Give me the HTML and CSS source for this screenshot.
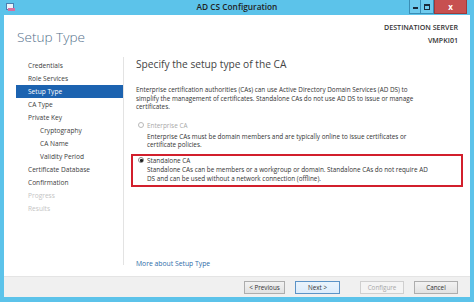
FILE: index.html
```html
<!DOCTYPE html>
<html lang="en">
<head>
    <meta charset="UTF-8">
    <title>AD CS Configuration</title>
    <link rel="stylesheet" href="styles.css">
</head>
<body>
    <div class="window">
        <div class="titlebar">
            <svg class="app-icon" width="9" height="9" viewBox="0 0 9 9">
                <rect x="0.5" y="0.5" width="7" height="6" fill="#e8f4fb" stroke="#4a7fb0" stroke-width="1"/>
                <rect x="2" y="5" width="7" height="3" fill="#d86fa0"/>
            </svg>
            <div class="title">AD CS Configuration</div>
            <div class="controls">
                <div class="ctl ctl-min"><span></span></div>
                <div class="ctl ctl-max"><span></span></div>
                <div class="ctl ctl-close">x</div>
            </div>
        </div>

        <div class="client">
            <div class="header">
                <h1>Setup Type</h1>
                <div class="dest">
                    <div>DESTINATION SERVER</div>
                    <div>VMPKI01</div>
                </div>
            </div>

            <div class="main">
                <ul class="nav">
                    <li>Credentials</li>
                    <li>Role Services</li>
                    <li class="active">Setup Type</li>
                    <li>CA Type</li>
                    <li>Private Key</li>
                    <li class="sub">Cryptography</li>
                    <li class="sub">CA Name</li>
                    <li class="sub">Validity Period</li>
                    <li>Certificate Database</li>
                    <li>Confirmation</li>
                    <li class="off">Progress</li>
                    <li class="off">Results</li>
                </ul>

                <div class="content">
                    <h2>Specify the setup type of the CA</h2>
                    <p class="intro">Enterprise certification authorities (CAs) can use Active Directory Domain Services (AD DS) to<br>
                    simplify the management of certificates. Standalone CAs do not use AD DS to issue or manage<br>
                    certificates.</p>

                    <div class="option disabled">
                        <div class="option-label"><span class="radio"></span>Enterprise CA</div>
                        <p>Enterprise CAs must be domain members and are typically online to issue certificates or<br>
                        certificate policies.</p>
                    </div>

                    <div class="option highlight">
                        <div class="option-label"><span class="radio checked"></span>Standalone CA</div>
                        <p>Standalone CAs can be members or a workgroup or domain. Standalone CAs do not require AD<br>
                        DS and can be used without a network connection (offline).</p>
                    </div>

                    <a class="more" href="#">More about Setup Type</a>
                </div>
            </div>

            <div class="footer">
                <button class="btn">&lt; Previous</button>
                <button class="btn btn-default">Next &gt;</button>
                <button class="btn btn-disabled">Configure</button>
                <button class="btn">Cancel</button>
            </div>
        </div>
    </div>
</body>
</html>
```

FILE: styles.css
```css
html, body {
    margin: 0;
    padding: 0;
}
body {
    font-family: "Open Sans", "Noto Sans", sans-serif;
    color: #333;
}
.window {
    width: 474px;
    height: 302px;
    box-sizing: border-box;
    background-color: #5cc3ea;
    padding: 0 4px 5px 4px;
    display: flex;
    flex-direction: column;
}
.titlebar {
    height: 15px;
    display: flex;
    align-items: flex-start;
    position: relative;
}
.app-icon {
    margin: 3px 0 0 2px;
}
.title {
    position: absolute;
    left: 0;
    right: 0;
    top: 1px;
    text-align: center;
    font-size: 8.3px;
    font-weight: 600;
    color: #222;
}
.controls {
    margin-left: auto;
    margin-right: 3px;
    display: flex;
    position: relative;
}
.ctl {
    height: 14px;
    box-sizing: border-box;
    border: 1px solid #3a8db5;
    border-top: none;
    display: flex;
    align-items: center;
    justify-content: center;
}
.ctl-min {
    width: 12px;
    background-color: #6fcbee;
}
.ctl-max {
    width: 13px;
    border-left: none;
    background-color: #6fcbee;
}
.ctl-min span {
    width: 5px;
    height: 2px;
    background-color: #1a2a3a;
    margin-top: 3px;
}
.ctl-max span {
    width: 4px;
    height: 3px;
    border: 1px solid #1a2a3a;
    border-top-width: 2px;
}
.ctl-close {
    width: 33px;
    background-color: #c75050;
    border-color: #9e3a3a;
    color: #fff;
    font-size: 8px;
    font-weight: bold;
    line-height: 1;
}
.client {
    flex: 1;
    background-color: #fff;
    display: flex;
    flex-direction: column;
}
.header {
    height: 42px;
    display: flex;
    justify-content: space-between;
    padding: 0 12px 0 13px;
}
.header h1 {
    margin: 12px 0 0 0;
    font-size: 13.6px;
    font-weight: 300;
    color: #55718c;
}
.dest {
    margin-top: 6px;
    text-align: right;
    font-size: 7.1px;
    font-weight: 600;
    line-height: 13px;
    color: #333;
}
.main {
    flex: 1;
    display: flex;
    padding-bottom: 11px;
}
.nav {
    list-style: none;
    margin: 0;
    padding: 2px 0 0 12px;
    width: 107px;
    border-right: 1px solid #e3e3e3;
}
.nav li {
    height: 13px;
    line-height: 13px;
    padding-left: 12px;
    font-size: 6.6px;
    color: #3c3c3c;
}
.nav li.sub {
    padding-left: 24px;
}
.nav li.active {
    background-color: #1c63b0;
    color: #fff;
}
.nav li.off {
    color: #c4c4c4;
}
.content {
    flex: 1;
    padding-left: 12px;
    display: flex;
    flex-direction: column;
}
.content h2 {
    margin: 0;
    font-size: 10.2px;
    font-weight: 400;
    line-height: 14px;
    color: #444;
}
.content p {
    margin: 0;
    font-size: 6.35px;
    line-height: 8.6px;
    white-space: nowrap;
    color: #333;
}
.intro {
    margin-top: 15px !important;
}
.option {
    margin-top: 9px;
}
.option-label {
    display: flex;
    align-items: center;
    height: 9px;
    font-size: 6.4px;
    margin-left: 2px;
}
.option p {
    margin-top: 3px !important;
    padding-left: 11px;
}
.radio {
    width: 4px;
    height: 4px;
    border: 1px solid #b9b9b9;
    border-radius: 50%;
    margin-right: 3px;
    background-color: #fff;
    display: flex;
    align-items: center;
    justify-content: center;
}
.radio.checked {
    border-color: #888;
}
.radio.checked::after {
    content: "";
    width: 3px;
    height: 3px;
    background-color: #222;
    border-radius: 1px;
}
.option.disabled .option-label {
    color: #a8a8a8;
}
.option.highlight {
    margin: 4px 7px 0 -5px;
    padding: 0 3px 2px 3px;
    border: 2px solid #d21f2c;
}
.option.highlight p {
    margin-top: 1px !important;
}
.more {
    margin-top: auto;
    margin-bottom: -3px;
    font-size: 6.8px;
    color: #2e6ca8;
    text-decoration: none;
}
.footer {
    height: 21px;
    box-sizing: border-box;
    background-color: #f0f0f0;
    border-top: 1px solid #e4e4e4;
    display: flex;
    align-items: center;
    justify-content: flex-end;
    padding: 0 12px 0 0;
    gap: 10px;
}
.btn {
    height: 13px;
    width: 44px;
    padding: 0;
    font-family: "Open Sans", "Noto Sans", sans-serif;
    font-size: 6.3px;
    color: #333;
    background: linear-gradient(#f2f2f2, #e2e2e2);
    border: 1px solid #adadad;
    border-radius: 0;
}
.btn:first-child {
    width: 41px;
}
.btn-default {
    width: 45px;
    border-color: #5b93c7;
    background: linear-gradient(#eaf4fc, #dcecfc);
}
.btn-disabled {
    margin-left: 10px;
    color: #a8a8a8;
    border-color: #cfcfcf;
    background: #f4f4f4;
}
```
